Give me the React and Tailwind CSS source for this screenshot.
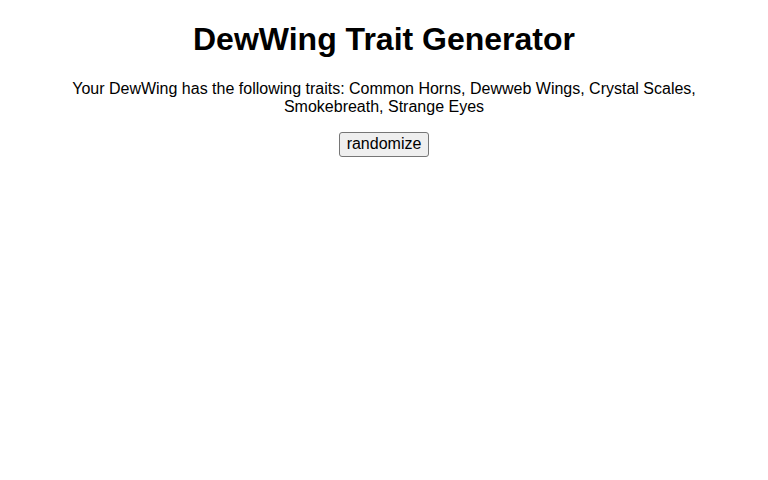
import React, { useState } from 'react';

const HORNS = ['Common Horns', 'Curled Horns', 'Spiral Horns', 'No Horns'];
const WINGS = ['Dewweb Wings', 'Feathered Wings', 'Leaf Wings', 'Tiny Wings'];
const SCALES = ['Crystal Scales', 'Smooth Scales', 'Mossy Scales', 'Pearl Scales'];
const BREATH = ['Smokebreath', 'Frostbreath', 'Mistbreath', 'Sparkbreath'];
const EYES = ['Strange Eyes', 'Glowing Eyes', 'Sleepy Eyes', 'Starry Eyes'];

const pick = (list) => list[Math.floor(Math.random() * list.length)];

const App = () => {
  const [traits, setTraits] = useState([
    'Common Horns',
    'Dewweb Wings',
    'Crystal Scales',
    'Smokebreath',
    'Strange Eyes',
  ]);

  const randomize = () => {
    setTraits([pick(HORNS), pick(WINGS), pick(SCALES), pick(BREATH), pick(EYES)]);
  };

  return (
    <div className="min-h-[480px] bg-white text-center text-black font-['Liberation_Sans',Arial,sans-serif] text-base">
      {/* Title */}
      <h1 className="text-[32px] leading-[36.8px] font-bold pt-[21.44px] mb-[21.44px]">
        DewWing Trait Generator
      </h1>

      {/* Trait list */}
      <p className="leading-[18.4px] max-w-[640px] mx-auto mb-4">
        Your DewWing has the following traits: {traits.join(', ')}
      </p>

      <button
        onClick={randomize}
        className="text-base leading-[18.4px] bg-[#efefef] border border-[#767676] rounded-[3px] px-[7px] py-[2px] hover:bg-[#e5e5e5] cursor-default"
      >
        randomize
      </button>
    </div>
  );
};

export default App;
